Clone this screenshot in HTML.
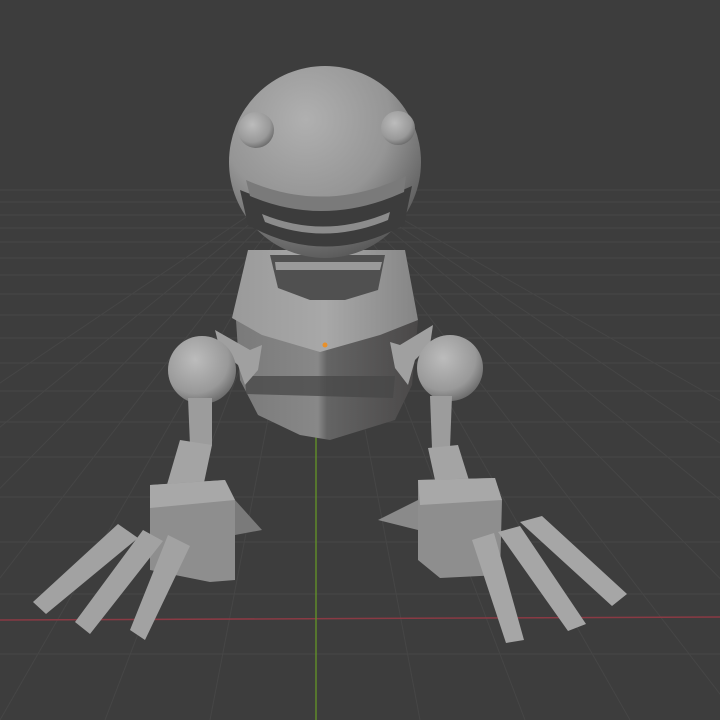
<!DOCTYPE html>
<html><head><meta charset="utf-8"><style>
html,body{margin:0;padding:0;background:#3d3d3d;}
svg{display:block}
</style></head><body>
<svg width="720" height="720" viewBox="0 0 720 720" xmlns="http://www.w3.org/2000/svg">
<defs>
<radialGradient id="head" cx="0.4" cy="0.28" r="0.8">
<stop offset="0" stop-color="#b0b0b0"/><stop offset="0.55" stop-color="#959595"/><stop offset="1" stop-color="#4e4e4e"/>
</radialGradient>
<radialGradient id="ball" cx="0.4" cy="0.35" r="0.7">
<stop offset="0" stop-color="#bcbcbc"/><stop offset="0.7" stop-color="#999"/><stop offset="1" stop-color="#666"/>
</radialGradient>
<linearGradient id="body" x1="0" x2="1">
<stop offset="0" stop-color="#7a7a7a"/><stop offset="0.45" stop-color="#888"/><stop offset="0.5" stop-color="#646464"/><stop offset="1" stop-color="#4a4848"/>
</linearGradient>
<linearGradient id="collar" x1="0" x2="1">
<stop offset="0" stop-color="#9a9a9a"/><stop offset="0.5" stop-color="#a8a8a8"/><stop offset="1" stop-color="#858585"/>
</linearGradient>
</defs>
<rect width="720" height="720" fill="#3d3d3d"/>
<g stroke="#464646" stroke-width="1">
<line x1="0" y1="190" x2="720" y2="190"/><line x1="0" y1="202" x2="720" y2="202"/>
<line x1="0" y1="215" x2="720" y2="215"/><line x1="0" y1="228" x2="720" y2="228"/>
<line x1="0" y1="242" x2="720" y2="242"/><line x1="0" y1="258" x2="720" y2="258"/>
<line x1="0" y1="275" x2="720" y2="275"/><line x1="0" y1="294" x2="720" y2="294"/>
<line x1="0" y1="315" x2="720" y2="315"/><line x1="0" y1="338" x2="720" y2="338"/>
<line x1="0" y1="363" x2="720" y2="363"/><line x1="0" y1="391" x2="720" y2="391"/>
<line x1="0" y1="422" x2="720" y2="422"/><line x1="0" y1="457" x2="720" y2="457"/>
<line x1="0" y1="497" x2="720" y2="497"/><line x1="0" y1="542" x2="720" y2="542"/>
<line x1="0" y1="594" x2="720" y2="594"/><line x1="0" y1="654" x2="720" y2="654"/>
<line x1="316" y1="170" x2="-500" y2="720"/><line x1="316" y1="170" x2="-360" y2="720"/>
<line x1="316" y1="170" x2="-230" y2="720"/><line x1="316" y1="170" x2="-110" y2="720"/>
<line x1="316" y1="170" x2="0" y2="720"/><line x1="316" y1="170" x2="105" y2="720"/>
<line x1="316" y1="170" x2="210" y2="720"/><line x1="316" y1="170" x2="420" y2="720"/>
<line x1="316" y1="170" x2="525" y2="720"/><line x1="316" y1="170" x2="630" y2="720"/>
<line x1="316" y1="170" x2="740" y2="720"/><line x1="316" y1="170" x2="860" y2="720"/>
<line x1="316" y1="170" x2="990" y2="720"/><line x1="316" y1="170" x2="1130" y2="720"/>
<line x1="316" y1="170" x2="1280" y2="720"/>
</g>
<line x1="0" y1="620" x2="720" y2="617" stroke="#8a3a44" stroke-width="1.5"/>
<line x1="316" y1="435" x2="316" y2="720" stroke="#5f8a2a" stroke-width="1.5"/>

<!-- torso -->
<path d="M236,320 L418,320 L412,385 L395,420 L330,440 L300,435 L258,415 L240,380 Z" fill="url(#body)"/>
<path d="M245,376 L395,376 L393,398 L246,394 Z" fill="#474747" opacity="0.75"/>
<path d="M248,250 L405,250 L418,320 L380,335 L320,352 L262,335 L232,318 Z" fill="url(#collar)"/>
<path d="M270,255 L385,255 L378,290 L345,300 L310,300 L278,288 Z" fill="#505050"/>
<path d="M275,262 L382,262 L380,270 L276,270 Z" fill="#9a9a9a"/>
<!-- head -->
<ellipse cx="325" cy="162" rx="96" ry="96" fill="url(#head)"/>
<path d="M240,190 Q325,225 412,186 L404,225 Q325,268 248,225 Z" fill="#3c3c3c"/>
<path d="M246,180 Q325,215 406,176 L404,192 Q325,228 250,196 Z" fill="#7a7a7a"/>
<path d="M262,214 Q325,240 390,212 L388,220 Q325,246 265,222 Z" fill="#8c8c8c"/>
<circle cx="256" cy="130" r="18" fill="url(#ball)"/>
<circle cx="398" cy="128" r="17" fill="url(#ball)"/>
<circle cx="325" cy="345" r="2.5" fill="#e8902a"/>

<!-- spikes -->
<g fill="#a0a0a0">
<path d="M215,330 L250,350 L262,345 L258,370 L245,385 L238,365 L220,350 Z"/>
<path d="M433,325 L400,345 L390,342 L395,368 L408,385 L415,360 L430,345 Z"/>
</g>
<!-- shoulders -->
<circle cx="202" cy="370" r="34" fill="url(#ball)"/>
<circle cx="450" cy="368" r="33" fill="url(#ball)"/>
<!-- arms -->
<path d="M188,398 L212,398 L212,445 L190,445 Z" fill="#9c9c9c"/>
<path d="M180,440 L212,445 L202,492 L166,488 Z" fill="#a4a4a4"/>
<path d="M430,396 L452,396 L450,448 L432,448 Z" fill="#9c9c9c"/>
<path d="M428,448 L458,445 L472,490 L438,494 Z" fill="#a4a4a4"/>
<!-- left foot -->
<path d="M150,485 L225,480 L235,500 L235,580 L210,582 L150,570 Z" fill="#8e8e8e"/>
<path d="M150,485 L225,480 L235,500 L150,508 Z" fill="#a8a8a8"/>
<path d="M235,500 L262,530 L235,535 Z" fill="#7a7a7a"/>
<g fill="#a2a2a2">
<path d="M118,524 L138,538 L46,614 L33,602 Z"/>
<path d="M143,530 L163,541 L90,634 L75,622 Z"/>
<path d="M168,535 L190,546 L145,640 L130,630 Z"/>
</g>
<!-- right foot -->
<path d="M418,480 L495,478 L502,500 L500,575 L440,578 L418,560 Z" fill="#8e8e8e"/>
<path d="M418,480 L495,478 L502,500 L420,505 Z" fill="#a8a8a8"/>
<path d="M418,500 L378,520 L418,530 Z" fill="#8a8a8a"/>
<g fill="#a6a6a6">
<path d="M472,540 L494,533 L524,640 L506,643 Z"/>
<path d="M498,532 L520,526 L586,624 L568,631 Z"/>
<path d="M520,522 L542,516 L627,594 L612,606 Z"/>
</g>
</svg>
</body></html>
